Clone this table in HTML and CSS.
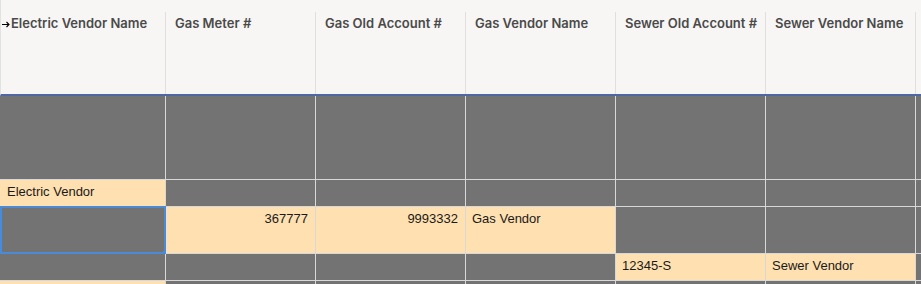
FILE: index.html
```html
<!DOCTYPE html>
<html>
<head>
<meta charset="utf-8">
<link rel="stylesheet" href="styles.css">
</head>
<body>
<div class="sheet">
  <div class="head">
    <div class="hcell first"><svg class="arrow" width="8" height="7" viewBox="0 0 8 7"><path d="M0 3.5H7M4.5 1L7 3.5L4.5 6" fill="none" stroke="#000" stroke-width="1.1"/></svg>Electric Vendor Name</div>
    <div class="hcell">Gas Meter #</div>
    <div class="hcell">Gas Old Account #</div>
    <div class="hcell">Gas Vendor Name</div>
    <div class="hcell">Sewer Old Account #</div>
    <div class="hcell">Sewer Vendor Name</div>
    <div class="hcell last"></div>
  </div>
  <div class="body">
    <div class="row r1">
      <div class="cell"></div><div class="cell"></div><div class="cell"></div><div class="cell"></div><div class="cell"></div><div class="cell"></div><div class="cell"></div>
    </div>
    <div class="row r2">
      <div class="cell on first">Electric Vendor</div><div class="cell"></div><div class="cell"></div><div class="cell"></div><div class="cell"></div><div class="cell"></div><div class="cell"></div>
    </div>
    <div class="row r3">
      <div class="cell first sel"><span class="handle"></span></div><div class="cell on num">367777</div><div class="cell on num">9993332</div><div class="cell on">Gas Vendor</div><div class="cell"></div><div class="cell"></div><div class="cell"></div>
    </div>
    <div class="row r2">
      <div class="cell"></div><div class="cell"></div><div class="cell"></div><div class="cell"></div><div class="cell on">12345-S</div><div class="cell on">Sewer Vendor</div><div class="cell"></div>
    </div>
    <div class="row r2">
      <div class="cell on first"></div><div class="cell"></div><div class="cell"></div><div class="cell"></div><div class="cell"></div><div class="cell"></div><div class="cell"></div>
    </div>
  </div>
</div>
</body>
</html>
```
FILE: styles.css
```css
html, body {
  margin: 0;
  padding: 0;
  background: #ffffff;
  overflow: hidden;
}
.sheet {
  width: 921px;
  height: 284px;
  overflow: hidden;
}
.head {
  display: grid;
  grid-template-columns: 165px repeat(5, 150px) 1fr;
  height: 96px;
  background: #f7f6f5;
  border-left: 1px solid #e2e2e2;
  border-bottom: 2px solid #4f68a3;
  box-sizing: border-box;
}
.hcell {
  margin-top: 12px;
  border-right: 1px solid #e0dfde;
  padding: 3px 0 0 9px;
  font-family: Inter, "Noto Sans", sans-serif;
  font-weight: 600;
  font-size: 13px;
  line-height: 16px;
  color: #4a4a4a;
  white-space: nowrap;
  display: flex;
  align-items: flex-start;
}
.hcell.first {
  padding-left: 0;
}
.hcell.first .arrow {
  margin: 6px 1px 0 1px;
  flex: none;
}
.hcell.last {
  border-right: none;
}
.row {
  display: grid;
  grid-template-columns: 166px repeat(5, 150px) 1fr;
}
.r1 { height: 84px; }
.r2 { height: 27px; }
.r3 { height: 47px; }
.cell {
  background: #737373;
  border-right: 1px solid #d8d8d8;
  border-bottom: 1px solid #d8d8d8;
  font-family: "Liberation Sans", Arial, sans-serif;
  font-size: 13px;
  line-height: 16px;
  color: #1a1a1a;
  padding: 4px 6px 0 6px;
  white-space: nowrap;
  position: relative;
}
.cell.first { padding-left: 7px; }
.cell.on { background: #ffe0b0; }
.cell.num { text-align: right; padding-right: 7px; }
.cell.sel {
  border: 2px solid #4a8ad6;
  margin-top: -1px;
}
.handle {
  position: absolute;
  right: -4px;
  bottom: -4px;
  width: 5px;
  height: 5px;
  background: #4a8ad6;
}
```
